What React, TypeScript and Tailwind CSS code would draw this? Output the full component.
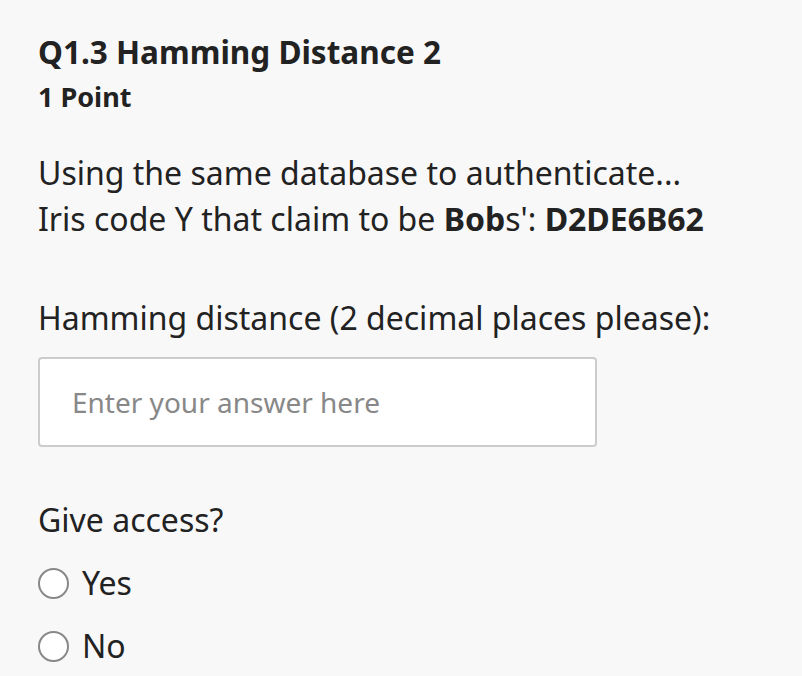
export default function App() {
  return (
    <div className="min-h-[676px] w-[802px] bg-[#f8f8f8] text-[#222] pl-[38px] pt-[30px]" style={{ fontFamily: '"Noto Sans", sans-serif' }}>
      <h1 className="text-[31.5px] font-bold leading-[44px]">Q1.3 Hamming Distance 2</h1>
      <div className="mt-[6px] text-[27px] font-bold leading-[34px]">1 Point</div>
      <div className="mt-[36px] text-[32px] leading-[46px]">
        <div>Using the same database to authenticate...</div>
        <div>
          Iris code Y that claim to be <b>Bob</b>s': <b>D2DE6B62</b>
        </div>
      </div>
      <div className="mt-[53px] text-[32px] leading-[46px]">Hamming distance (2 decimal places please):</div>
      <input
        className="mt-[16px] block w-[559px] h-[90px] rounded-[4px] border-2 border-[#ccc] bg-white px-[32px] text-[28px] placeholder:text-[#888] outline-none"
        placeholder="Enter your answer here"
      />
      <div className="mt-[50px] text-[32px] leading-[46px]">Give access?</div>
      <div className="mt-[17px] flex flex-col gap-[17px]">
        {["Yes", "No"].map((o) => (
          <label key={o} className="flex items-center gap-[13px] text-[32px] leading-[46px]">
            <span className="h-[31px] w-[31px] rounded-full border-2 border-[#888] bg-white" />
            {o}
          </label>
        ))}
      </div>
    </div>
  );
}
